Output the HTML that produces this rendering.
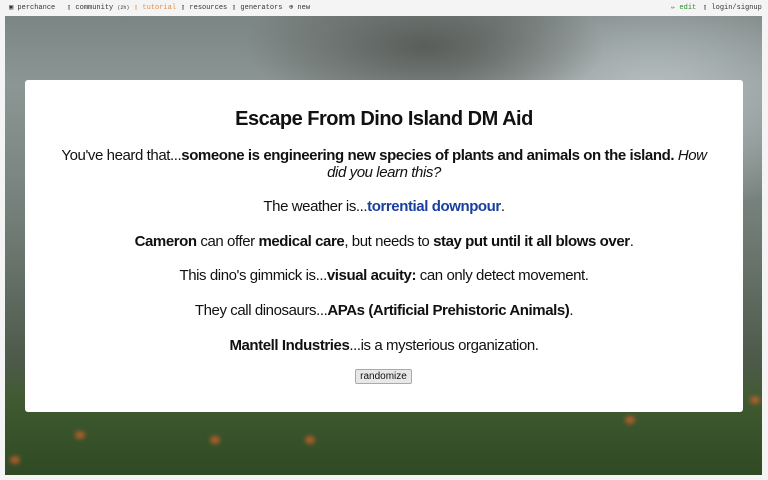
<!DOCTYPE html>
<html><head><meta charset="utf-8"><style>
html,body{margin:0;padding:0;width:768px;height:480px;overflow:hidden;background:#f4f4f4;font-family:"Liberation Sans",sans-serif}
.nav{position:absolute;top:0;left:0;right:0;height:16px;font-family:"Liberation Mono",monospace;font-size:7px;color:#333;line-height:16px}
.nav span{position:absolute;top:0;white-space:nowrap}
.bg{position:absolute;left:5px;top:16px;width:757px;height:459px;overflow:hidden;
background:
radial-gradient(ellipse 180px 70px at 420px 30px,#5a5d5a 0,rgba(90,93,90,0) 100%),
radial-gradient(ellipse 200px 120px at 650px 80px,#b8c0c2 0,rgba(184,192,194,0) 100%),
linear-gradient(180deg,#7b8583 0%,#8c9694 15%,#737d78 45%,#4d5a4a 75%,#3f5a2f 85%,#35522a 100%);}
.grass{position:absolute;left:0;right:0;bottom:0;height:75px;background:linear-gradient(180deg,#3f5a30,#2f4a24)}
.fire{position:absolute;width:10px;height:8px;background:#c8602a;border-radius:50%;filter:blur(2px);opacity:.8}
.card{position:absolute;left:25px;top:80px;width:718px;height:332px;background:#fff;border-radius:3px;text-align:center;color:#111;font-size:15px;letter-spacing:-0.42px}
.card p{position:absolute;left:34px;right:34px;margin:0;line-height:17px}
h1{position:absolute;left:0;right:0;margin:0;font-size:20px;font-weight:bold;letter-spacing:-0.5px}
a{color:#1a3f9e;font-weight:bold;text-decoration:none}
button{position:absolute;left:330px;top:289px;width:57px;height:15px;font-size:10px;font-family:"Liberation Sans",sans-serif;background:#e8e8e8;border:1px solid #aaa;border-radius:2px;padding:0;color:#111;letter-spacing:0}
</style></head><body>
<div class="nav">
<span style="left:9px">▣ perchance</span>
<span style="left:67px">▯ community <small style="font-size:5px">(2h)</small></span>
<span style="left:134px;color:#e0904a">▯ tutorial</span>
<span style="left:181px">▯ resources</span>
<span style="left:232px">▯ generators</span>
<span style="left:289px">⊕ new</span>
<span style="left:671px;color:#2a8a2a">✏ edit</span>
<span style="left:703px">▯ login/signup</span>
</div>
<div class="bg"><div class="grass"></div>
<div class="fire" style="left:5px;top:440px"></div><div class="fire" style="left:70px;top:415px"></div><div class="fire" style="left:205px;top:420px"></div><div class="fire" style="left:300px;top:420px"></div><div class="fire" style="left:620px;top:400px"></div><div class="fire" style="left:745px;top:380px"></div>
</div>
<div class="card">
<h1 style="top:28px">Escape From Dino Island DM Aid</h1>
<p style="top:67px">You've heard that...<b>someone is engineering new species of plants and animals on the island.</b> <i>How did you learn this?</i></p>
<p style="top:118px">The weather is...<a>torrential downpour</a>.</p>
<p style="top:153px"><b>Cameron</b> can offer <b>medical care</b>, but needs to <b>stay put until it all blows over</b>.</p>
<p style="top:187px">This dino's gimmick is...<b>visual acuity:</b> can only detect movement.</p>
<p style="top:222px">They call dinosaurs...<b>APAs (Artificial Prehistoric Animals)</b>.</p>
<p style="top:257px"><b>Mantell Industries</b>...is a mysterious organization.</p>
<button>randomize</button>
</div>
</body></html>
